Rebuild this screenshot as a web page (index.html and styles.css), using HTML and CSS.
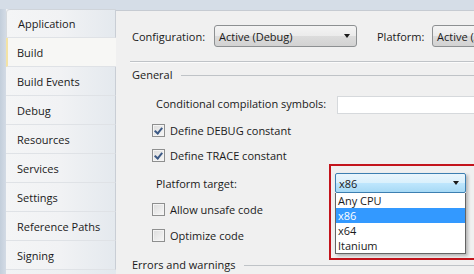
FILE: index.html
```html
<!DOCTYPE html>
<html>
<head>
<meta charset="utf-8">
<link rel="stylesheet" href="styles.css">
</head>
<body>
<div class="window">
  <div class="edge"></div>
  <nav class="sidebar">
    <div class="tab first">Application</div>
    <div class="tab active">Build</div>
    <div class="tab">Build Events</div>
    <div class="tab">Debug</div>
    <div class="tab">Resources</div>
    <div class="tab">Services</div>
    <div class="tab">Settings</div>
    <div class="tab">Reference Paths</div>
    <div class="tab">Signing</div>
  </nav>
  <main class="panel">
    <div class="row config">
      <span class="lbl-config">Configuration:</span>
      <div class="select sel-config"><span>Active (Debug)</span><span class="arrow"></span></div>
      <span class="lbl-platform">Platform:</span>
      <div class="select sel-platform"><span>Active (Any CPU)</span><span class="arrow"></span></div>
    </div>
    <div class="sep"></div>
    <div class="row group r-general"><span>General</span><span class="line"></span></div>
    <div class="row indent r-cond">
      <span class="lbl-cond">Conditional compilation symbols:</span>
      <div class="textbox"></div>
    </div>
    <div class="row check r-debug"><span class="cb checked"></span><span>Define DEBUG constant</span></div>
    <div class="row check r-trace"><span class="cb checked"></span><span>Define TRACE constant</span></div>
    <div class="row indent r-platform"><span>Platform target:</span></div>
    <div class="row check r-unsafe"><span class="cb"></span><span>Allow unsafe code</span></div>
    <div class="row check r-opt"><span class="cb"></span><span>Optimize code</span></div>
    <div class="row group r-errors"><span>Errors and warnings</span><span class="line"></span></div>

    <div class="highlight">
      <div class="dropdown">
        <div class="dd-head"><span>x86</span><span class="arrow"></span></div>
        <ul class="dd-list">
          <li>Any CPU</li>
          <li class="sel">x86</li>
          <li>x64</li>
          <li>Itanium</li>
        </ul>
      </div>
    </div>
  </main>
</div>
</body>
</html>
```
FILE: styles.css
```css
* { box-sizing: border-box; }
html, body { margin: 0; padding: 0; }
body {
  width: 474px;
  height: 274px;
  overflow: hidden;
  background: #d5dde7;
  font-family: "Open Sans", "Noto Sans", sans-serif;
  font-size: 11px;
  color: #1a1a1a;
}
.window {
  display: flex;
  height: 274px;
  padding-top: 9px;
}
.edge {
  width: 6px;
  background: linear-gradient(to right, #c3cedb, #d3dbe5);
  flex: none;
}
.sidebar {
  width: 110px;
  flex: none;
  display: flex;
  flex-direction: column;
  background: linear-gradient(to right, #f2f3f5 0%, #eef0f2 50%, #e2e8ee 100%);
}
.tab {
  height: 29px;
  display: flex;
  align-items: center;
  padding-left: 11px;
  border-bottom: 1px solid #dfe2e6;
  border-right: 1px solid #c9ced5;
  white-space: nowrap;
  background: linear-gradient(to right, #f4f5f6 0%, #f1f2f4 50%, #e4e9ee 100%);
}
.tab.first {
  border-top: 1px solid #cfd4da;
  border-left: 1px solid #d6dade;
  border-top-left-radius: 4px;
}
.tab.active {
  background: #f7f7f5;
  border-right: none;
  border-left: 2px solid #f3e3a6;
  padding-left: 9px;
}
.panel {
  position: relative;
  flex: 1;
  min-width: 0;
  background: #f0f0f0;
  border-top: 1px solid #c6cbd2;
  margin-top: 1px;
  padding-left: 14px;
  overflow: hidden;
}
.row {
  display: flex;
  align-items: center;
  white-space: nowrap;
  height: 20px;
}
.config {
  height: 22px;
  margin-top: 14px;
  margin-left: 2px;
}
.lbl-config { width: 82px; flex: none; }
.lbl-platform { margin-left: 20px; width: 55px; flex: none; }
.select {
  height: 22px;
  flex: none;
  display: flex;
  align-items: center;
  justify-content: space-between;
  padding: 0 6px 0 4px;
  border: 1px solid #8d9092;
  border-radius: 3px;
  background: linear-gradient(to bottom, #f4f4f4 0%, #ebebeb 50%, #dcdcdc 51%, #d2d2d2 100%);
}
.sel-config { width: 143px; }
.sel-platform { width: 143px; }
.arrow {
  width: 0; height: 0;
  border-left: 3.5px solid transparent;
  border-right: 3.5px solid transparent;
  border-top: 4px solid #1a1a1a;
}
.sep {
  background: #bfc3c7;
  margin-top: 14px;
  border-bottom: 1px solid #fbfbfb;
  height: 2px;
}
.group { margin-left: 2px; }
.group .line {
  flex: 1;
  height: 1px;
  margin-left: 9px;
  background: #bfc3c7;
  margin-top: 2px;
}
.r-general { margin-top: 1px; }
.indent { padding-left: 26px; }
.r-cond { margin-top: 9px; }
.lbl-cond { width: 181px; flex: none; }
.textbox {
  flex: none;
  width: 160px;
  height: 18px;
  background: #ffffff;
  border: 1px solid #d6d9dc;
  margin-top: 3px;
}
.check { padding-left: 22px; gap: 5px; }
.cb {
  width: 13px; height: 13px;
  flex: none;
  border: 1px solid #8e8f8f;
  background: linear-gradient(135deg, #dcdcdc 0%, #f7f7f7 100%);
  box-shadow: inset 0 0 0 1px #f4f4f4;
  position: relative;
}
.cb.checked::after {
  content: "";
  position: absolute;
  left: 3px; top: 1px;
  width: 3px; height: 6px;
  border-right: 2px solid #3d5a86;
  border-bottom: 2px solid #3d5a86;
  transform: rotate(40deg);
}
.r-debug { margin-top: 7px; }
.r-trace { margin-top: 5px; }
.r-platform { margin-top: 8px; }
.r-unsafe { margin-top: 6px; }
.r-opt { margin-top: 6px; }
.r-errors { margin-top: 9px; }

.highlight {
  position: absolute;
  left: 213px;
  top: 153px;
  width: 150px;
  height: 96px;
  border: 2px solid #c3141c;
  padding: 7px 0 0 4px;
}
.dropdown {
  width: 131px;
  box-shadow: 2px 2px 3px rgba(0,0,0,0.25);
}
.dd-head {
  height: 20px;
  display: flex;
  align-items: center;
  justify-content: space-between;
  padding: 0 6px 0 3px;
  border: 1px solid #3c7fb1;
  border-radius: 2px;
  background: linear-gradient(to bottom, #eaf6fd 0%, #d9f0fc 50%, #bee6fd 51%, #a7d9f5 100%);
}
.dd-list {
  list-style: none;
  margin: 0;
  padding: 0;
  background: #fff;
  border: 1px solid #646464;
  border-top: none;
}
.dd-list li {
  height: 15px;
  line-height: 15px;
  padding-left: 2px;
}
.dd-list li.sel {
  background: #3399ff;
  color: #fff;
}
```
